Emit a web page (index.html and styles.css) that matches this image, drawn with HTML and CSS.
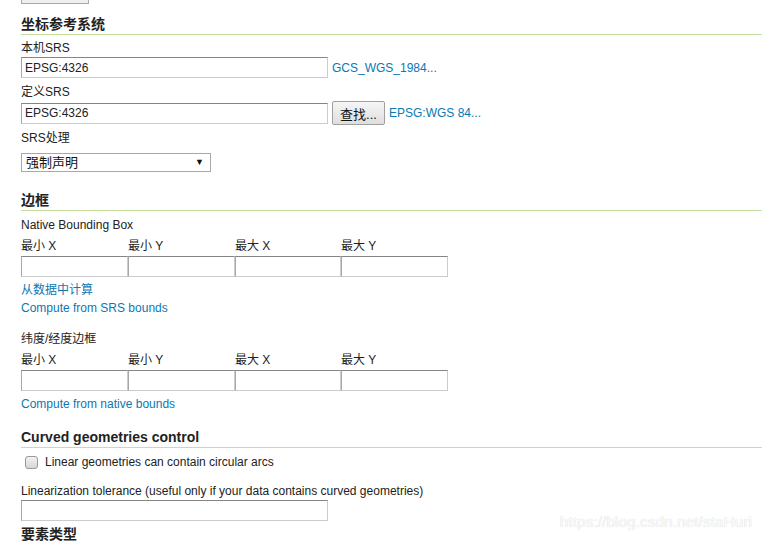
FILE: index.html
```
<!DOCTYPE html>
<html>
<head>
    <meta charset="UTF-8">
    <title>图层编辑</title>
    <link rel="stylesheet" href="styles.css">
</head>
<body>
<div id="wrap">
    <div class="topBtn"></div>

    <h3 class="title">坐标参考系统</h3>
    <p class="label gapS">本机SRS</p>
    <div class="row">
        <input class="text wide" type="text" value="EPSG:4326">
        <a class="link" href="#">GCS_WGS_1984...</a>
    </div>
    <p class="label gapM">定义SRS</p>
    <div class="row tall">
        <input class="text wide" type="text" value="EPSG:4326">
        <button class="btn" type="button">查找...</button>
        <a class="link" href="#">EPSG:WGS 84...</a>
    </div>
    <p class="label gapT">SRS处理</p>
    <div class="select">
        <span>强制声明</span>
    </div>

    <h3 class="title second">边框</h3>
    <p class="label gapM">Native Bounding Box</p>
    <div class="bbox">
        <p class="label">最小 X</p>
        <p class="label">最小 Y</p>
        <p class="label">最大 X</p>
        <p class="label">最大 Y</p>
        <input class="text" type="text">
        <input class="text" type="text">
        <input class="text" type="text">
        <input class="text" type="text">
    </div>
    <a class="link block gapT" href="#">从数据中计算</a>
    <a class="link block gapXs" href="#">Compute from SRS bounds</a>

    <p class="label gapL">纬度/经度边框</p>
    <div class="bbox">
        <p class="label">最小 X</p>
        <p class="label">最小 Y</p>
        <p class="label">最大 X</p>
        <p class="label">最大 Y</p>
        <input class="text" type="text">
        <input class="text" type="text">
        <input class="text" type="text">
        <input class="text" type="text">
    </div>
    <a class="link block gapT" href="#">Compute from native bounds</a>

    <h3 class="title third">Curved geometries control</h3>
    <label class="check">
        <input type="checkbox">
        <span>Linear geometries can contain circular arcs</span>
    </label>
    <p class="label gapXl">Linearization tolerance (useful only if your data contains curved geometries)</p>
    <input class="text wide single" type="text">

    <h3 class="title last">要素类型</h3>

    <div class="mark">https://blog.csdn.net/staHuri</div>
</div>
</body>
</html>
```

FILE: styles.css
```
body{margin:0;font-family:"Liberation Sans","Noto Sans CJK SC",sans-serif;font-size:12px;color:#222;}
p,h3{margin:0;}

#wrap{
    position: relative;
    height: 543px;
    padding-left: 21px;
    overflow: hidden;
}
#wrap .topBtn{
    width: 66px;
    height: 3px;
    background-color: #eee;
    border: 1px solid #aaa;
    border-top: none;
}

#wrap .title{
    margin-top: 11px;
    height: 19px;
    line-height: 19px;
    font-size: 14px;
    font-weight: bold;
    color: #222;
    border-bottom: 1px solid #c8e09f;
}
#wrap .title.second{ margin-top: 19px; }
#wrap .title.third{ margin-top: 16px; }
#wrap .title.last{ margin-top: 4px; border-bottom: none; }

#wrap .label{
    line-height: 16px;
}
#wrap .gapXs{ margin-top: 2px; }
#wrap .gapS{ margin-top: 5px; }
#wrap .gapT{ margin-top: 5px; }
#wrap .gapM{ margin-top: 6px; }
#wrap .gapXl{ margin-top: 13px; }
#wrap .gapL{ margin-top: 15px; }

#wrap .row{
    display: flex;
    align-items: center;
    gap: 4px;
    margin-top: 1px;
}
#wrap .row.tall{
    margin-top: 1px;
    height: 24px;
}

#wrap .text{
    box-sizing: border-box;
    height: 21px;
    margin: 0;
    padding: 0 3px;
    font-family: "Liberation Sans","Noto Sans CJK SC",sans-serif;
    font-size: 12px;
    color: #222;
    background-color: #fff;
    border: 1px solid #ccc;
    border-top-color: #858585;
    border-left-color: #a8a8a8;
    outline: none;
}
#wrap .text.wide{ width: 307px; }
#wrap .text.single{ display: block; margin-top: 1px; }

#wrap .link{
    color: #0b78b3;
    text-decoration: none;
    line-height: 16px;
}
#wrap .link.block{ display: block; width: max-content; }

#wrap .btn{
    box-sizing: border-box;
    width: 53px;
    height: 24px;
    padding: 0;
    font-family: "Liberation Sans","Noto Sans CJK SC",sans-serif;
    font-size: 13px;
    color: #111;
    background: linear-gradient(#f6f6f6, #dedede);
    border: 1px solid #a0a0a0;
    border-radius: 2px;
}

#wrap .select{
    position: relative;
    box-sizing: border-box;
    width: 190px;
    height: 19px;
    margin-top: 7px;
    padding-left: 4px;
    line-height: 18px;
    font-size: 13px;
    color: #111;
    border: 1px solid #a9a9a9;
}
#wrap .select:after{
    content: "\25BC";
    position: absolute;
    right: 6px;
    top: 0;
    font-size: 9px;
    line-height: 17px;
    color: #111;
}

#wrap .bbox{
    display: grid;
    grid-template-columns: 107px 107px 106px 107px;
    row-gap: 2px;
    margin-top: 5px;
}
#wrap .bbox .text{ width: 100%; }

#wrap .check{
    display: flex;
    align-items: center;
    gap: 7px;
    height: 16px;
    margin-top: 6px;
    padding-left: 4px;
}
#wrap .check input{
    -webkit-appearance: none;
    appearance: none;
    box-sizing: border-box;
    width: 13px;
    height: 13px;
    margin: 0;
    background: linear-gradient(#f2f2f2, #d6d6d6);
    border: 1px solid #9a9a9a;
    border-radius: 3px;
}

#wrap .mark{
    position: absolute;
    right: 10px;
    top: 513px;
    font-size: 15.5px;
    color: #f9f9f9;
    text-shadow: 0 0 1px #d0d0d0;
}
```
